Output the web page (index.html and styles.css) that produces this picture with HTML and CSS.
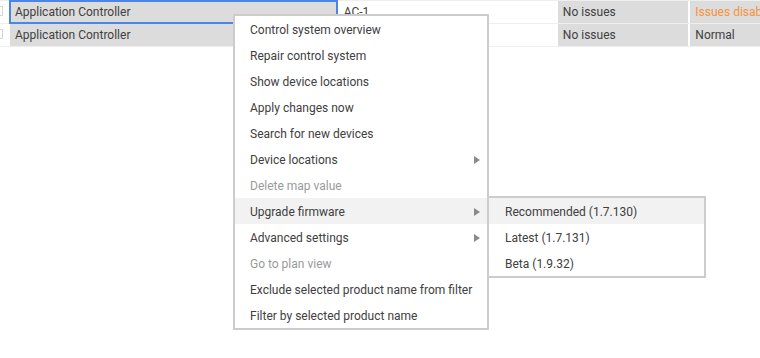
FILE: index.html
```html
<!DOCTYPE html>
<html>
<head>
<meta charset="utf-8">
<link rel="stylesheet" href="styles.css">
</head>
<body>
<div class="grid">
  <div class="row">
    <div class="cell chk"><span class="box"></span></div>
    <div class="cell name selected">Application Controller</div>
    <div class="cell id">AC-1</div>
    <div class="cell status">No issues</div>
    <div class="cell state warn">Issues disabled</div>
  </div>
  <div class="row">
    <div class="cell chk"><span class="box"></span></div>
    <div class="cell name">Application Controller</div>
    <div class="cell id"></div>
    <div class="cell status">No issues</div>
    <div class="cell state">Normal</div>
  </div>
</div>

<div class="menu main-menu">
  <div class="item">Control system overview</div>
  <div class="item">Repair control system</div>
  <div class="item">Show device locations</div>
  <div class="item">Apply changes now</div>
  <div class="item">Search for new devices</div>
  <div class="item">Device locations<span class="arrow"></span></div>
  <div class="item disabled">Delete map value</div>
  <div class="item active">Upgrade firmware<span class="arrow"></span></div>
  <div class="item">Advanced settings<span class="arrow"></span></div>
  <div class="item disabled">Go to plan view</div>
  <div class="item">Exclude selected product name from filter</div>
  <div class="item">Filter by selected product name</div>
</div>

<div class="menu sub-menu">
  <div class="item active">Recommended (1.7.130)</div>
  <div class="item">Latest (1.7.131)</div>
  <div class="item">Beta (1.9.32)</div>
</div>
</body>
</html>
```

FILE: styles.css
```css
html, body {
  margin: 0;
  padding: 0;
  background: #ffffff;
  font-family: Roboto, "Liberation Sans", sans-serif;
  font-size: 12px;
  color: #404040;
  overflow: hidden;
}

.grid {
  display: flex;
  flex-direction: column;
  border-top: 1px solid #eeeeee;
  width: 780px;
}

.row {
  display: flex;
  height: 23px;
  border-bottom: 1px solid #eeeeee;
  box-sizing: border-box;
}

.cell {
  height: 22px;
  line-height: 22px;
  padding-left: 5px;
  box-sizing: border-box;
  white-space: nowrap;
  overflow: hidden;
}

.chk {
  width: 10px;
  padding: 0;
}

.box {
  display: block;
  width: 12px;
  height: 10px;
  margin: 5px 0 0 -9px;
  border: 1px solid #d6d6d6;
  box-sizing: border-box;
}

.name {
  width: 328px;
  background: #dcdcdc;
  margin-right: 2px;
}

.selected {
  outline: 2px solid #4a86e8;
  outline-offset: -1px;
}

.id {
  width: 218px;
  background: #ffffff;
  margin-right: 2px;
}

.status {
  width: 131px;
  background: #dcdcdc;
  margin-right: 2px;
}

.state {
  width: 90px;
  background: #dcdcdc;
}

.warn {
  color: #f7923a;
}

.menu {
  position: absolute;
  background: #ffffff;
  border: 2px solid #cccccc;
  box-sizing: border-box;
}

.main-menu {
  left: 233px;
  top: 14px;
  width: 256px;
}

.sub-menu {
  left: 487px;
  top: 196px;
  width: 219px;
}

.item {
  display: flex;
  align-items: center;
  justify-content: space-between;
  height: 26px;
  box-sizing: border-box;
  padding: 2px 7px 0 15px;
  white-space: nowrap;
  color: #404040;
}

.sub-menu .item {
  padding-top: 1px;
  padding-left: 16px;
}

.item.active {
  background: #f2f2f2;
}

.item.disabled {
  color: #9a9a9a;
}

.arrow {
  width: 0;
  height: 0;
  border-left: 6px solid #8a8a8a;
  border-top: 4px solid transparent;
  border-bottom: 4px solid transparent;
}
```
